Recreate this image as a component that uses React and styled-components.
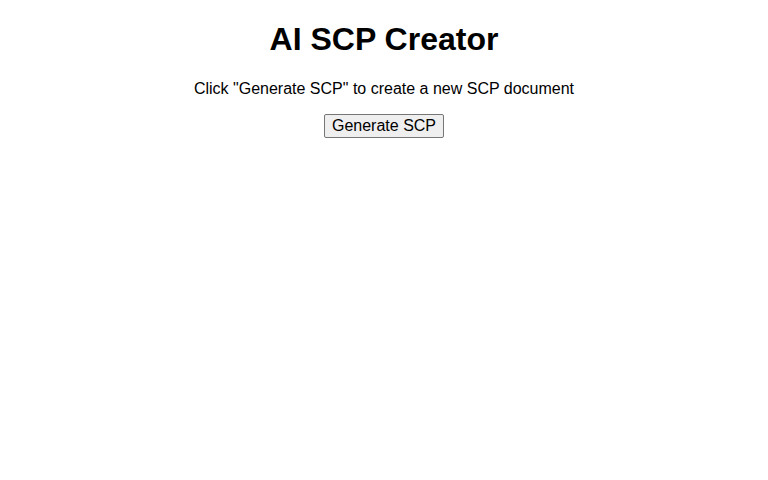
import React, { useState } from 'react';
import styled, { createGlobalStyle } from 'styled-components';

const GlobalStyle = createGlobalStyle`
  body {
    margin: 0;
    background: #ffffff;
    color: #000000;
    font-family: "Liberation Sans", Arial, sans-serif;
  }
`;

const Container = styled.div`
  text-align: center;
  padding: 0 8px;
`;

const Title = styled.h1`
  font-size: 32px;
  font-weight: 700;
  margin: 21.44px 0;
`;

const Hint = styled.p`
  font-size: 16px;
  margin: 16px 0;
`;

const GenerateButton = styled.button`
  font-family: "Liberation Sans", Arial, sans-serif;
  font-size: 16px;
  line-height: 18px;
  padding: 2px 7px;
  color: #000000;
  background: #efefef;
  border: 1px solid #767676;
  border-radius: 2px;
  cursor: pointer;

  &:hover {
    background: #e5e5e5;
  }
`;

const App = () => {
  const [doc, setDoc] = useState(null);

  return (
    <Container>
      <GlobalStyle />
      <Title>AI SCP Creator</Title>
      {doc ? <Hint>{doc}</Hint> : <Hint>Click "Generate SCP" to create a new SCP document</Hint>}
      <GenerateButton onClick={() => setDoc(null)}>Generate SCP</GenerateButton>
    </Container>
  );
};

export default App;
